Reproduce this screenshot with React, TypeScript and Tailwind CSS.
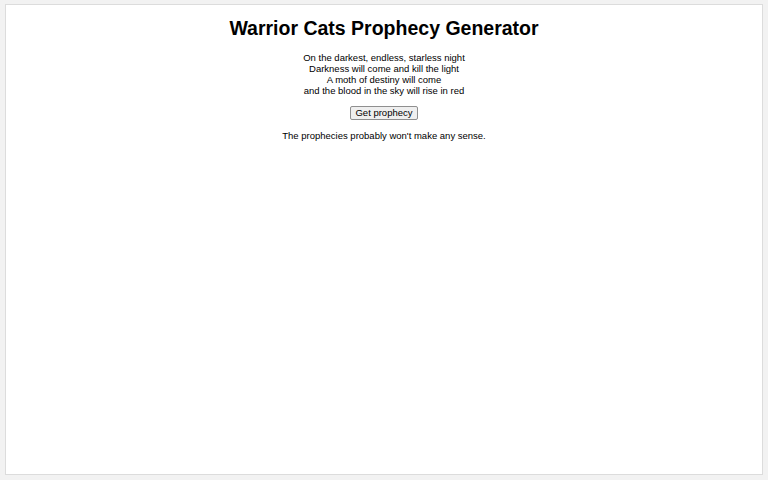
export default function App() {
  return (
    <div className="h-[480px] w-[768px] bg-[#f2f2f2] p-[5px] pt-1 font-['Liberation_Sans',Arial,sans-serif] text-black">
      <div className="flex h-[471px] flex-col items-center border border-[#dcdcdc] bg-white">
        <h1 className="mt-[10px] text-[19.5px] font-bold leading-[26px]">Warrior Cats Prophecy Generator</h1>
        <div className="mt-[11px] text-center text-[9.5px] leading-[11px]">
          <p>On the darkest, endless, starless night</p>
          <p>Darkness will come and kill the light</p>
          <p>A moth of destiny will come</p>
          <p>and the blood in the sky will rise in red</p>
        </div>
        <button className="mt-[10px] rounded-[2px] border border-[#8f8f8f] bg-[#efefef] px-[4px] text-[9.5px] leading-[12px]">
          Get prophecy
        </button>
        <p className="mt-[10px] text-[9.5px] leading-[11px]">The prophecies probably won't make any sense.</p>
      </div>
    </div>
  );
}
